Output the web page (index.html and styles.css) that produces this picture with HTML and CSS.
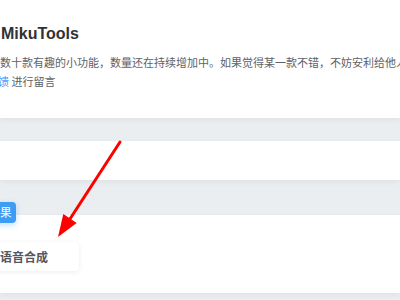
FILE: index.html
```html
<!DOCTYPE html>
<html lang="zh">
<head>
<meta charset="utf-8">
<link rel="stylesheet" href="styles.css">
</head>
<body>
<div class="page">
  <section class="header">
    <h1 class="title">MikuTools</h1>
    <p class="desc">数十款有趣的小功能，数量还在持续增加中。如果觉得某一款不错，不妨安利给他人</p>
    <p class="desc desc2"><span class="link">馈</span> 进行留言</p>
  </section>
  <div class="gap gap1"></div>
  <section class="card card1"></section>
  <div class="gap gap2">
    <span class="btn">果</span>
  </div>
  <section class="card card2">
    <div class="item">语音合成</div>
  </section>
  <div class="gap gap3"></div>
</div>
<svg class="arrow" width="400" height="300" viewBox="0 0 400 300">
  <line x1="120" y1="142" x2="68" y2="222" stroke="#ff0000" stroke-width="3" stroke-linecap="round"/>
  <polygon points="58,237 63.3,214.1 76.7,222.9" fill="#ff0000"/>
</svg>
</body>
</html>
```
FILE: styles.css
```css
html, body {
  margin: 0;
  padding: 0;
  width: 400px;
  height: 300px;
  overflow: hidden;
  background: #ebeef1;
}
.page {
  display: flex;
  flex-direction: column;
  font-family: "Noto Sans CJK SC", "Liberation Sans", sans-serif;
}
.header {
  background: #fff;
  height: 118px;
  box-sizing: border-box;
  padding-top: 24px;
  box-shadow: 0 2px 6px rgba(0, 0, 0, 0.05);
  position: relative;
}
.title {
  margin: 0 0 9px 1px;
  font: bold 16px/20px "Liberation Sans", "Noto Sans CJK SC", sans-serif;
  color: #2f3236;
}
.desc {
  margin: 0;
  font-size: 11px;
  line-height: 19px;
  color: #606266;
  white-space: nowrap;
}
.desc2 {
  margin-left: -2px;
}
.link {
  color: #409eff;
}
.gap1 {
  height: 23px;
}
.card {
  background: #fff;
  box-shadow: 0 2px 6px rgba(0, 0, 0, 0.05);
  position: relative;
}
.card1 {
  height: 39px;
}
.gap2 {
  height: 35px;
  display: flex;
  align-items: flex-start;
}
.btn {
  position: relative;
  z-index: 2;
  margin: 22px 0 0 -10px;
  padding: 0 4px 0 10px;
  height: 21px;
  line-height: 21px;
  font-size: 11.5px;
  color: #fff;
  background: #3d9df6;
  border-radius: 4px;
  box-shadow: 0 2px 6px rgba(64, 158, 255, 0.35);
}
.card2 {
  height: 78px;
  padding-top: 27px;
  box-sizing: border-box;
}
.item {
  margin-left: -10px;
  width: 89px;
  height: 29px;
  line-height: 29px;
  padding-left: 10px;
  box-sizing: border-box;
  font-size: 12px;
  font-weight: bold;
  color: #55585e;
  background: #fff;
  border-radius: 4px;
  box-shadow: 0 1px 5px rgba(0, 0, 0, 0.08);
}
.gap3 {
  height: 20px;
}
.arrow {
  position: absolute;
  left: 0;
  top: 0;
}
```
